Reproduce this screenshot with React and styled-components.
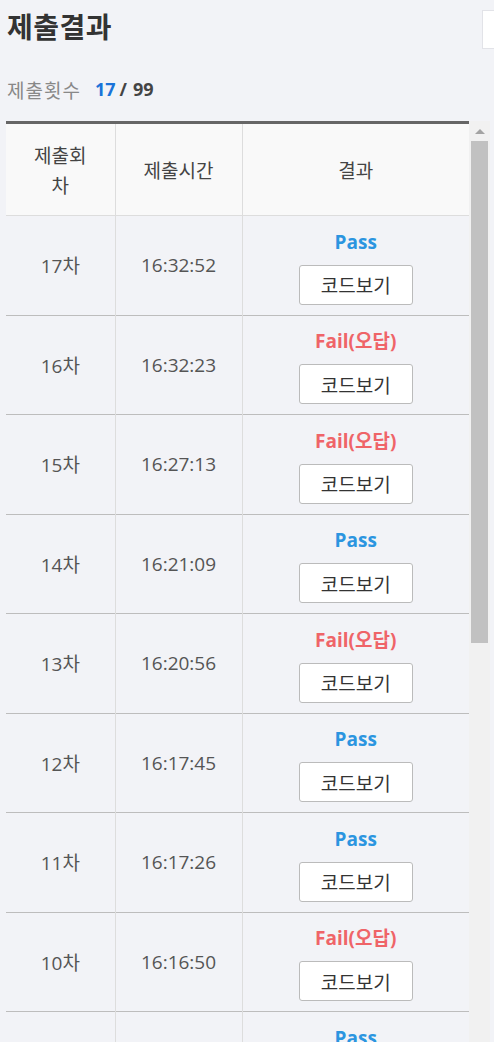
import React from 'react'
import styled, { createGlobalStyle } from 'styled-components'

const GlobalStyle = createGlobalStyle`
  html, body {
    margin: 0;
    padding: 0;
    background: #f2f3f7;
    overflow: hidden;
  }
  body {
    font-family: "Open Sans", "Noto Sans CJK KR", sans-serif;
  }
`

const Page = styled.div`
  padding: 0 4px 0 6px;
`

const Header = styled.div`
  display: flex;
  justify-content: space-between;
  align-items: flex-start;
  height: 66px;
`

const Title = styled.h2`
  margin: 7px 0 0 1px;
  font-size: 28px;
  line-height: 38px;
  font-weight: 700;
  color: #333;
  font-family: "Noto Sans CJK KR", sans-serif;
  letter-spacing: 0.5px;
`

// 오른쪽 끝에 잘려서 보이는 입력창
const SearchBox = styled.div`
  width: 11px;
  height: 37px;
  margin-top: 10px;
  margin-right: -4px;
  background: #fff;
  border: 1px solid #e2e3e8;
  border-right: none;
`

const CountRow = styled.div`
  display: flex;
  align-items: center;
  height: 46px;
  padding-left: 1px;
  margin-bottom: 9px;
`

const CountLabel = styled.span`
  font-size: 19px;
  color: #888;
  font-family: "Noto Sans CJK KR", sans-serif;
  letter-spacing: 1px;
  margin-right: 14px;
`

const CountValue = styled.span`
  font-size: 18px;
  font-weight: 700;
  color: ${(p) => (p.$blue ? '#1a73d9' : '#444')};
`

const Slash = styled.span`
  font-size: 18px;
  font-weight: 700;
  color: #444;
  margin: 0 6px 0 4px;
`

const ListArea = styled.div`
  display: flex;
  height: 967px;
`

const TableBox = styled.div`
  flex: 1;
  overflow: hidden;
`

// 스크린샷에 보이는 세로 스크롤바
const ScrollTrack = styled.div`
  width: 21px;
  background: #f1f1f1;
  display: flex;
  flex-direction: column;
  align-items: center;
`

const ScrollArrow = styled.div`
  height: 20px;
  width: 100%;
  display: flex;
  align-items: center;
  justify-content: center;

  &::before {
    content: "";
    border-left: 5px solid transparent;
    border-right: 5px solid transparent;
    border-bottom: 5px solid #a3a3a3;
  }
`

const ScrollThumb = styled.div`
  width: 17px;
  height: 502px;
  background: #c1c1c1;
`

const Table = styled.table`
  width: 100%;
  border-collapse: collapse;
  border-top: 3px solid #666;
  table-layout: fixed;
`

const Th = styled.th`
  width: ${(p) => p.$w};
  height: 93px;
  padding: 0 20px;
  background: #f9f9f9;
  font-size: 19px;
  line-height: 30px;
  font-weight: 400;
  color: #444;
  font-family: "Noto Sans CJK KR", sans-serif;
  border-left: 1px solid #ddd;
  border-bottom: 1px solid #ddd;
  box-sizing: border-box;

  &:first-child {
    border-left: none;
  }
`

const Row = styled.tr`
  border-bottom: 1px solid #bdbdbd;
`

const Td = styled.td`
  text-align: center;
  vertical-align: middle;
  font-size: 19px;
  color: #555;
  border-left: 1px solid #ddd;
  padding: 0;

  &:first-child {
    border-left: none;
  }
`

const ResultCell = styled.div`
  display: flex;
  flex-direction: column;
  align-items: center;
  padding: 13.5px 0 10px;
`

const Status = styled.span`
  font-size: 19px;
  line-height: 24px;
  font-weight: 700;
  color: ${(p) => (p.$pass ? '#2b95e0' : '#ef6468')};
  font-family: "Open Sans", "Noto Sans CJK KR", sans-serif;
  margin-bottom: 11px;
`

const CodeButton = styled.button`
  width: 114px;
  height: 40px;
  background: #fff;
  border: 1px solid #bbb;
  border-radius: 3px;
  font-size: 19px;
  color: #333;
  font-family: "Noto Sans CJK KR", sans-serif;
  padding: 0;
  cursor: pointer;
`

const submissions = [
  { no: 17, time: '16:32:52', pass: true },
  { no: 16, time: '16:32:23', pass: false },
  { no: 15, time: '16:27:13', pass: false },
  { no: 14, time: '16:21:09', pass: true },
  { no: 13, time: '16:20:56', pass: false },
  { no: 12, time: '16:17:45', pass: true },
  { no: 11, time: '16:17:26', pass: true },
  { no: 10, time: '16:16:50', pass: false },
  { no: 9, time: '16:15:32', pass: true },
  { no: 8, time: '16:12:08', pass: false },
  { no: 7, time: '16:10:41', pass: false },
  { no: 6, time: '16:07:19', pass: true },
  { no: 5, time: '16:05:02', pass: false },
  { no: 4, time: '16:01:37', pass: false },
  { no: 3, time: '15:58:14', pass: true },
  { no: 2, time: '15:55:46', pass: false },
  { no: 1, time: '15:52:20', pass: false },
]

function App() {
  return (
    <Page>
      <GlobalStyle />
      <Header>
        <Title>제출결과</Title>
        <SearchBox />
      </Header>
      <CountRow>
        <CountLabel>제출횟수</CountLabel>
        <CountValue $blue>17</CountValue>
        <Slash>/</Slash>
        <CountValue>99</CountValue>
      </CountRow>
      <ListArea>
        <TableBox>
          <Table>
            <thead>
              <tr>
                <Th $w="109px">제출회차</Th>
                <Th $w="127px">제출시간</Th>
                <Th>결과</Th>
              </tr>
            </thead>
            <tbody>
              {submissions.map(({ no, time, pass }) => (
                <Row key={no}>
                  <Td>{no}차</Td>
                  <Td>{time}</Td>
                  <Td>
                    <ResultCell>
                      <Status $pass={pass}>{pass ? 'Pass' : 'Fail(오답)'}</Status>
                      <CodeButton>코드보기</CodeButton>
                    </ResultCell>
                  </Td>
                </Row>
              ))}
            </tbody>
          </Table>
        </TableBox>
        <ScrollTrack>
          <ScrollArrow />
          <ScrollThumb />
        </ScrollTrack>
      </ListArea>
    </Page>
  )
}

export default App
